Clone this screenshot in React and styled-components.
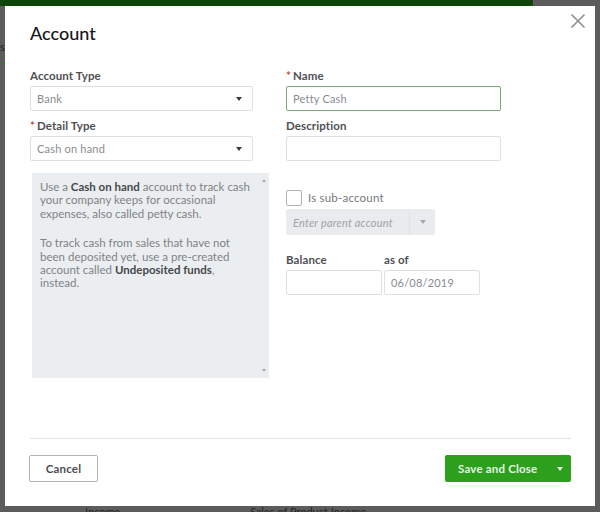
import React from "react";
import styled, { createGlobalStyle } from "styled-components";

const Global = createGlobalStyle`
  html, body {
    margin: 0;
    padding: 0;
    background: #5c5c5c;
  }
  * {
    box-sizing: border-box;
  }
`;

const Page = styled.div`
  position: relative;
  width: 600px;
  height: 512px;
  overflow: hidden;
  background: #5c5c5c;
  font-family: Lato, "Open Sans", sans-serif;
  color: #393a3d;
  padding: 6px 5px;
`;

const TopBar = styled.div`
  position: absolute;
  top: 0;
  left: 0;
  width: 533px;
  height: 6px;
  background: #0f4509;
`;

const BackdropLine = styled.div`
  position: absolute;
  left: 0;
  top: 63px;
  width: 5px;
  height: 1px;
  background: #2f7a28;
`;

const BackdropText = styled.span`
  position: absolute;
  left: ${(p) => p.$x}px;
  top: ${(p) => p.$y}px;
  font-size: 11px;
  line-height: 12px;
  color: #242424;
`;

const Modal = styled.div`
  position: relative;
  height: 500px;
  background: #fff;
  padding: 15px 24px 24px 25px;
  display: flex;
  flex-direction: column;
`;

const CloseButton = styled.button`
  position: absolute;
  top: 7px;
  right: 9px;
  width: 16px;
  height: 16px;
  padding: 0;
  border: 0;
  background: none;
  display: flex;
`;

const Title = styled.h1`
  margin: 0 0 23px;
  font-size: 18px;
  line-height: 24px;
  font-weight: 500;
  color: #15171a;
`;

const Columns = styled.div`
  display: flex;
  flex: 1;
  gap: 33px;
`;

const LeftColumn = styled.div`
  width: 223px;
  display: flex;
  flex-direction: column;
`;

const RightColumn = styled.div`
  width: 215px;
  display: flex;
  flex-direction: column;
`;

const Label = styled.label`
  display: block;
  height: 18px;
  margin-top: ${(p) => p.$top || 0}px;
  font-size: 11.5px;
  line-height: 16px;
  font-weight: 700;
  color: #4f5054;
  letter-spacing: 0.1px;
`;

const Star = styled.span`
  color: #c9503f;
  margin-right: 2px;
`;

const Field = styled.div`
  height: 25px;
  border: 1px solid ${(p) => (p.$active ? "#7da87a" : "#dfe0e3")};
  border-radius: 2px;
  background: #fff;
  padding: 0 6px;
  display: flex;
  align-items: center;
  justify-content: space-between;
  font-size: 11px;
  letter-spacing: 0.2px;
  color: #8a8c90;
`;

const Caret = styled.span`
  width: 0;
  height: 0;
  margin-right: ${(p) => (p.$flush ? 0 : 4)}px;
  border-left: 3px solid transparent;
  border-right: 3px solid transparent;
  border-top: 4px solid ${(p) => p.$color || "#393a3d"};
`;

const HelpBox = styled.div`
  position: relative;
  width: 237px;
  height: 205px;
  margin: 12px 0 0 2px;
  padding: 7px 16px 0 8px;
  background: #ebeef0;
  font-size: 11.5px;
  line-height: 13.4px;
  color: #808286;

  p {
    margin: 0 0 16px;
  }

  b {
    color: #46484c;
    font-weight: 700;
  }
`;

const ScrollArrow = styled.span`
  position: absolute;
  right: 3px;
  ${(p) => (p.$down ? "bottom: 6px;" : "top: 6px;")}
  width: 0;
  height: 0;
  border-left: 2.5px solid transparent;
  border-right: 2.5px solid transparent;
  ${(p) => (p.$down ? "border-top" : "border-bottom")}: 3px solid #a5a7ab;
`;

const CheckRow = styled.div`
  display: flex;
  align-items: center;
  gap: 6px;
  margin-top: 29px;
  font-size: 11.5px;
  letter-spacing: 0.2px;
  color: #76787c;
`;

const CheckLabel = styled.span`
  padding-bottom: 2px;
`;

const Checkbox = styled.span`
  width: 16px;
  height: 16px;
  border: 1px solid #b0b2b6;
  border-radius: 2px;
  background: #fff;
`;

const ParentSelect = styled.div`
  width: 149px;
  height: 26px;
  margin-top: 3px;
  display: flex;
  align-items: center;
  background: #e9ebed;
  border-radius: 2px;
  font-size: 11px;
  font-style: italic;
  letter-spacing: 0.2px;
  color: #a0a2a6;
`;

const ParentText = styled.span`
  flex: 1;
  height: 100%;
  display: flex;
  align-items: center;
  padding-left: 7px;
  border-right: 1px solid #e0e2e4;
`;

const ParentCaret = styled.span`
  width: 25px;
  display: flex;
  justify-content: center;
`;

const BalanceRow = styled.div`
  display: flex;
  gap: 2px;
  margin-top: 17px;
`;

const BalanceItem = styled.div`
  width: 96px;
`;

const Divider = styled.div`
  height: 1px;
  margin-top: auto;
  background: #e2e3e5;
`;

const Footer = styled.div`
  display: flex;
  justify-content: space-between;
  margin: 16px 0 0 -1px;
`;

const CancelButton = styled.button`
  width: 69px;
  height: 27px;
  padding: 0;
  background: #fff;
  border: 1px solid #b0b2b6;
  border-radius: 2px;
  font-family: inherit;
  font-size: 11.5px;
  font-weight: 700;
  letter-spacing: 0.2px;
  color: #4c4e52;
`;

const SaveButton = styled.button`
  width: 126px;
  height: 27px;
  padding: 0 8px 0 13px;
  display: flex;
  align-items: center;
  justify-content: space-between;
  background: #2ca01c;
  border: 0;
  border-radius: 2px;
  font-family: inherit;
  font-size: 11.5px;
  font-weight: 700;
  letter-spacing: 0.2px;
  color: #e6f4e3;
`;

const App = () => {
  return (
    <Page>
      <Global />
      <TopBar />
      <BackdropLine />
      <BackdropText $x={0} $y={41}>s</BackdropText>
      <BackdropText $x={85} $y={506}>Income</BackdropText>
      <BackdropText $x={250} $y={506}>Sales of Product Income</BackdropText>
      <Modal>
        <CloseButton aria-label="Close">
          <svg width="16" height="16" viewBox="0 0 16 16">
            <path d="M1.5 1.5l13 13M14.5 1.5l-13 13" stroke="#8d8f93" strokeWidth="1.6" fill="none" />
          </svg>
        </CloseButton>
        <Title>Account</Title>
        <Columns>
          <LeftColumn>
            <Label>Account Type</Label>
            <Field>
              Bank
              <Caret />
            </Field>
            <Label $top={7}>
              <Star>*</Star>Detail Type
            </Label>
            <Field>
              Cash on hand
              <Caret />
            </Field>
            <HelpBox>
              <ScrollArrow />
              <ScrollArrow $down />
              <p>
                Use a <b>Cash on hand</b> account to track cash your company keeps for occasional expenses, also called petty cash.
              </p>
              <p>
                To track cash from sales that have not been deposited yet, use a pre-created account called <b>Undeposited funds</b>, instead.
              </p>
            </HelpBox>
          </LeftColumn>
          <RightColumn>
            <Label>
              <Star>*</Star>Name
            </Label>
            <Field $active>Petty Cash</Field>
            <Label $top={7}>Description</Label>
            <Field />
            <CheckRow>
              <Checkbox />
              <CheckLabel>Is sub-account</CheckLabel>
            </CheckRow>
            <ParentSelect>
              <ParentText>Enter parent account</ParentText>
              <ParentCaret>
                <Caret $color="#a5a7ab" $flush />
              </ParentCaret>
            </ParentSelect>
            <BalanceRow>
              <BalanceItem>
                <Label>Balance</Label>
                <Field />
              </BalanceItem>
              <BalanceItem>
                <Label>as of</Label>
                <Field>06/08/2019</Field>
              </BalanceItem>
            </BalanceRow>
          </RightColumn>
        </Columns>
        <Divider />
        <Footer>
          <CancelButton>Cancel</CancelButton>
          <SaveButton>
            Save and Close
            <Caret $color="#e6f4e3" $flush />
          </SaveButton>
        </Footer>
      </Modal>
    </Page>
  );
};

export default App;
